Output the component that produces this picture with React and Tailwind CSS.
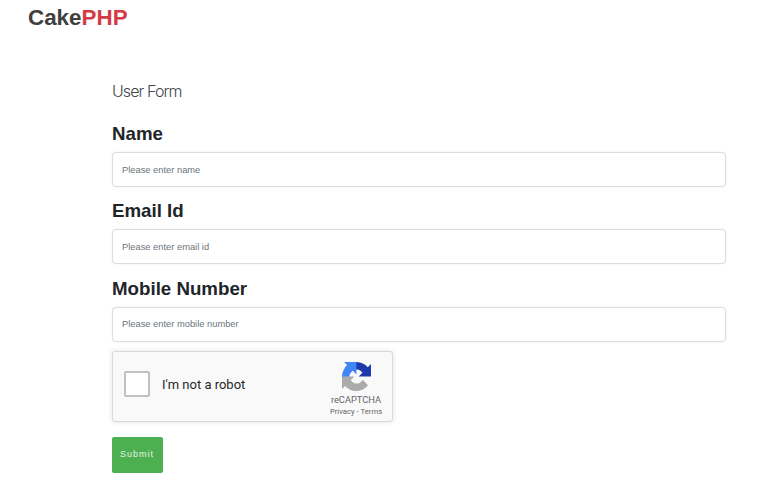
const fields = [
  { label: "Name", placeholder: "Please enter name" },
  { label: "Email Id", placeholder: "Please enter email id" },
  { label: "Mobile Number", placeholder: "Please enter mobile number" },
];

const RecaptchaLogo = () => (
  <svg width="29" height="29" viewBox="0 0 64 64">
    <path d="M64 31.955l-.033-1.37V4.687l-7.16 7.16C50.948 4.674 42.033.093 32.05.093c-10.4 0-19.622 4.96-25.458 12.64l11.736 11.86a15.55 15.55 0 0 1 4.754-5.334c2.05-1.6 4.952-2.906 8.968-2.906.485 0 .86.057 1.135.163 4.976.393 9.288 3.14 11.828 7.124l-8.307 8.307c10.522-.04 22.4-.066 27.295.005" fill="#1c3aa9" />
    <path d="M31.862.094l-1.37.033H4.594l7.16 7.16C4.58 13.147 0 22.06 0 32.046c0 10.4 4.96 19.622 12.64 25.458l11.86-11.736a15.55 15.55 0 0 1-5.334-4.754c-1.6-2.05-2.906-4.952-2.906-8.968 0-.485.057-.86.163-1.135.393-4.976 3.14-9.288 7.124-11.828l8.307 8.307c-.04-10.522-.066-22.4.005-27.295" fill="#4285f4" />
    <path d="M.001 32.045l.033 1.37v25.898l7.16-7.16c5.86 7.173 14.774 11.754 24.76 11.754 10.4 0 19.622-4.96 25.458-12.64L45.677 39.407a15.55 15.55 0 0 1-4.754 5.334c-2.05 1.6-4.952 2.906-8.968 2.906-.485 0-.86-.057-1.135-.163-4.976-.393-9.288-3.14-11.828-7.124l8.307-8.307c-10.522.04-22.4.066-27.295-.005" fill="#ababab" />
  </svg>
);

export default function App() {
  return (
    <div className="min-h-screen bg-white font-['Liberation_Sans',sans-serif] text-[#212529]">
      <div className="pl-[28px] pt-[4px] h-[60px]">
        <a className="text-[22.4px] leading-[28px] font-bold text-[#404041]">
          Cake<span className="text-[#d33c44]">PHP</span>
        </a>
      </div>

      <div className="ml-[112px] w-[614px]">
        <h3 className="mt-[20px] font-['Inter',sans-serif] font-light text-[16px] leading-[22px] tracking-[-0.9px] text-[#3f4850]">
          User Form
        </h3>

        <form className="mt-[20px]">
          {fields.map((f) => (
            <div key={f.label} className="mb-[12.33px]">
              <label className="block text-[18.72px] leading-[24px] font-bold mb-[6px]">{f.label}</label>
              <input
                placeholder={f.placeholder}
                className="block w-full h-[35px] px-[9px] text-[9.33px] bg-white border border-[#dcdcdc] rounded-[4px] shadow-[0_0_2px_rgba(0,0,0,0.08)] outline-none placeholder:text-[#6c757d]"
              />
            </div>
          ))}

          <div className="-mt-[3px] w-[281px] h-[71px] flex items-center bg-[#f9f9f9] border border-[#d9d9d9] rounded-[3px] shadow-[0_0_4px_1px_rgba(0,0,0,0.08)] font-['Roboto',sans-serif]">
            <div className="ml-[11px] mb-[5px] w-[26px] h-[26px] bg-white border-2 border-[#c1c1c1] rounded-[2px]" />
            <span className="ml-[12px] mb-[3px] text-[13px] text-[#282828]">I'm not a robot</span>
            <div className="ml-auto mt-[6px] w-[70px] mr-[1px] flex flex-col items-center text-[#666]">
              <RecaptchaLogo />
              <div className="text-[9.3px] leading-[12px] mt-[3px]">reCAPTCHA</div>
              <div className="text-[7.7px] leading-[11px]">Privacy - Terms</div>
            </div>
          </div>

          <button
            type="button"
            className="mt-[15px] w-[51px] h-[36px] bg-[#4caf50] rounded-[2px] text-white/85 font-medium text-[9px] tracking-[1px] pr-[1px]"
          >
            Submit
          </button>
        </form>
      </div>
    </div>
  );
}
